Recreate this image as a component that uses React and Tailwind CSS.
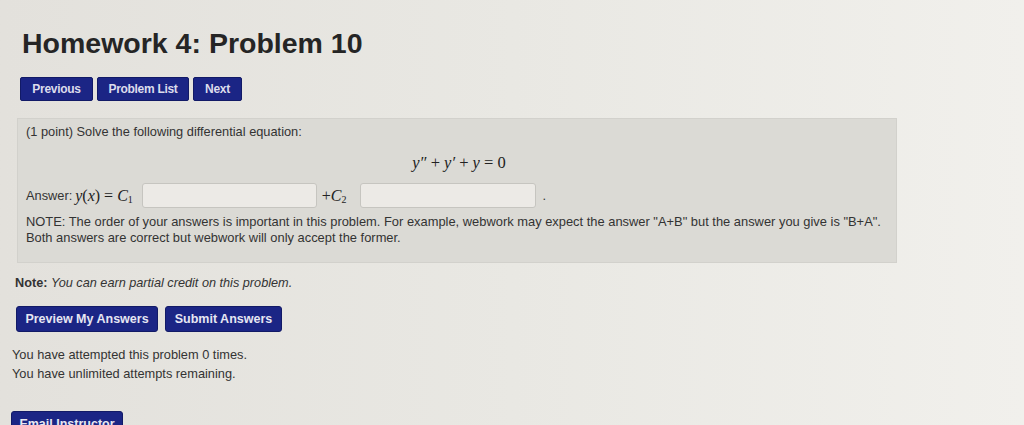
export default function App() {
  const sans = { fontFamily: '"Liberation Sans", Arial, sans-serif' };
  const serif = { fontFamily: '"Liberation Serif", "Times New Roman", serif' };

  return (
    <div
      className="w-[1024px] h-[425px] overflow-hidden bg-linear-to-r from-[#e3e1dc] via-[#e9e8e3] to-[#f1f0ec] text-[#333] relative"
      style={sans}
    >
      {/* Header */}
      <h1 className="ml-[22px] pt-[25px] text-[28.5px] leading-[36px] font-bold text-[#252525]">
        Homework 4: Problem 10
      </h1>

      {/* Nav buttons */}
      <div className="ml-[20px] mt-[16px] flex gap-[4px]">
        <NavButton className="w-[73px]">Previous</NavButton>
        <NavButton className="w-[92px]">Problem List</NavButton>
        <NavButton className="w-[49px]">Next</NavButton>
      </div>

      {/* Problem box */}
      <div className="ml-[17px] mt-[17px] w-[880px] h-[145px] bg-[#dbdad5] border border-[#d2d1cc] pl-[8px] pr-[4px] pt-[4px] text-[12.8px]">
        <p className="leading-[17px]">(1 point) Solve the following differential equation:</p>

        <p className="mt-[14px] text-center text-[16.5px] leading-[18px] italic text-[#222]" style={serif}>
          y″ <span className="not-italic">+</span> y′ <span className="not-italic">+</span> y{" "}
          <span className="not-italic">= 0</span>
        </p>

        <div className="mt-[11px] flex items-center h-[25px]">
          <span>Answer:</span>
          <span className="ml-[3px] text-[16px] italic text-[#222]" style={serif}>
            y<span className="not-italic">(</span>x<span className="not-italic">) = </span>C
            <sub className="not-italic text-[10px]">1</sub>
          </span>
          <input className="ml-[9px] w-[175px] h-[25px] bg-[#eceae6] border border-[#c6c5c0] rounded-[3px]" />
          <span className="ml-[5px] text-[16px] text-[#222]" style={serif}>
            +<span className="italic">C</span>
            <sub className="text-[10px]">2</sub>
          </span>
          <input className="ml-[13px] w-[176px] h-[25px] bg-[#eceae6] border border-[#c6c5c0] rounded-[3px]" />
          <span className="ml-[7px]">.</span>
        </div>

        <p className="mt-[6px] text-[12.9px] leading-[16px] whitespace-nowrap">
          NOTE: The order of your answers is important in this problem. For example, webwork may expect the
          answer "A+B" but the answer you give is "B+A".
          <br />
          Both answers are correct but webwork will only accept the former.
        </p>
      </div>

      {/* Note */}
      <p className="ml-[15px] mt-[12px] text-[12.7px] leading-[17px]">
        <span className="font-bold">Note:</span>{" "}
        <span className="italic">You can earn partial credit on this problem.</span>
      </p>

      {/* Submit buttons */}
      <div className="ml-[16px] mt-[14px] flex gap-[7px]">
        <ActionButton className="w-[142px]">Preview My Answers</ActionButton>
        <ActionButton className="w-[117px]">Submit Answers</ActionButton>
      </div>

      {/* Attempts */}
      <div className="ml-[12px] mt-[13px] text-[12.8px] leading-[19px]">
        <p>You have attempted this problem 0 times.</p>
        <p>You have unlimited attempts remaining.</p>
      </div>

      {/* Email instructor (cut off at the bottom, as in the page) */}
      <div className="ml-[11px] mt-[28px] w-[112px] h-[26px] bg-[#1b2585] border border-[#121a66] rounded-[3px] text-[#e8e8f2] text-[12.5px] font-bold flex items-center justify-center">
        Email Instructor
      </div>
    </div>
  );
}

function NavButton({ className = "", children }) {
  return (
    <button
      className={`h-[24px] bg-[#1b2585] border border-[#121a66] rounded-[2px] text-[#dcdcec] text-[12px] font-bold tracking-[-0.3px] flex items-center justify-center ${className}`}
    >
      {children}
    </button>
  );
}

function ActionButton({ className = "", children }) {
  return (
    <button
      className={`h-[26px] bg-[#1b2585] border border-[#121a66] rounded-[3px] text-[#e6e6f2] text-[12.5px] font-bold flex items-center justify-center ${className}`}
    >
      {children}
    </button>
  );
}
